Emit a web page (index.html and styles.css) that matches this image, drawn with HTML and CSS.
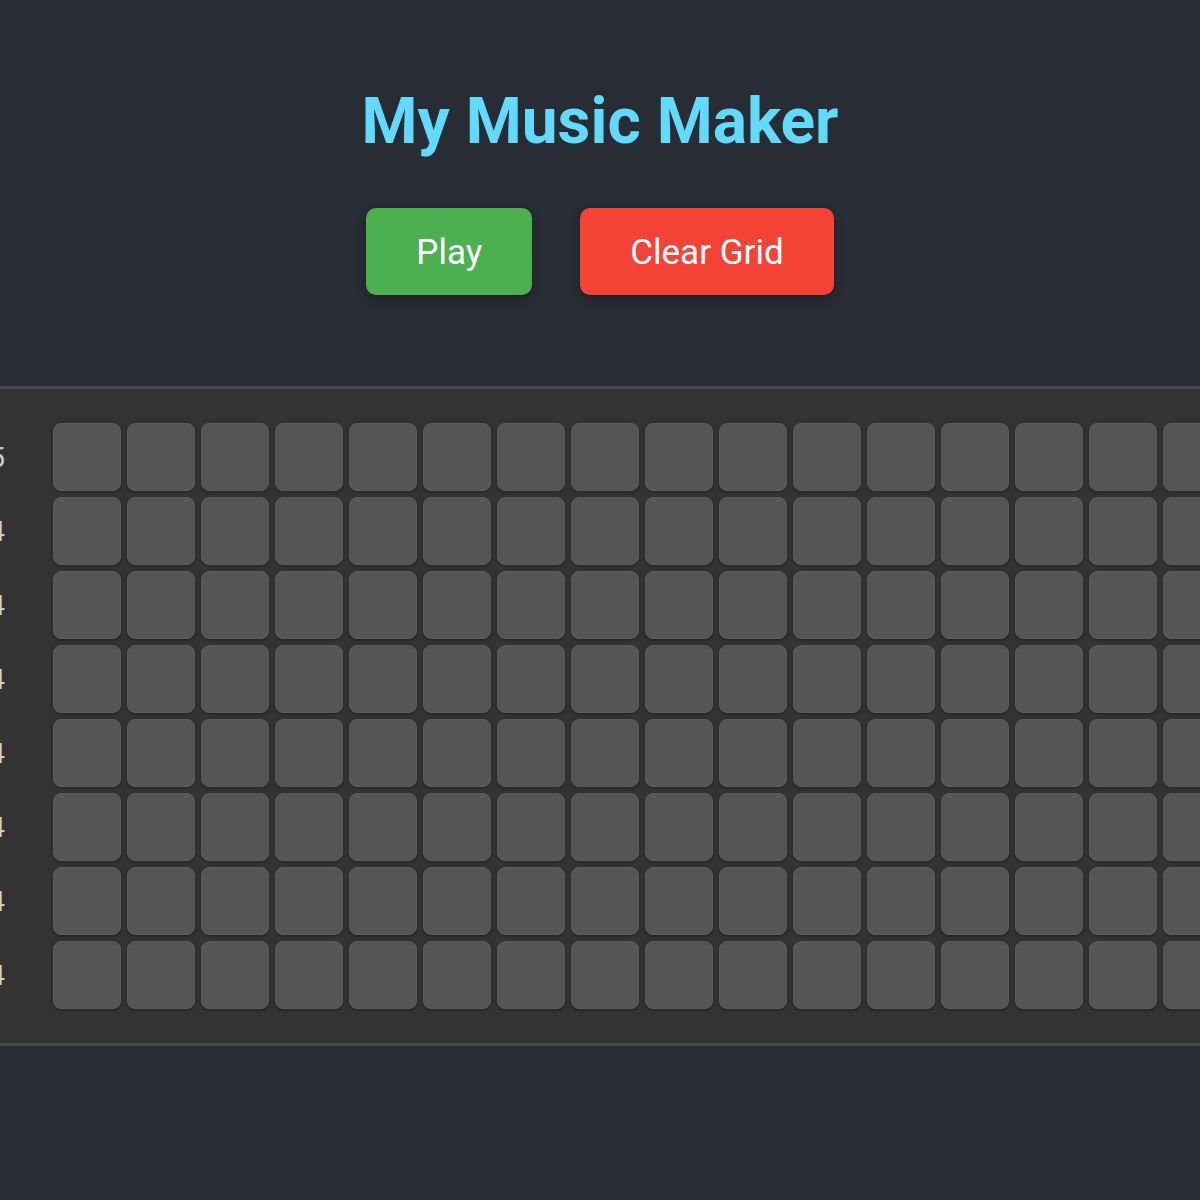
FILE: index.html
```html
<!DOCTYPE html>
<html>
<head>
    <meta name="viewport" content="width=device-width, initial-scale=1.0">
    <title>My Music Maker</title>
    <link rel="stylesheet" href="styles.css">
</head>
<body>
    <div class="app">
        <h1 class="title">My Music Maker</h1>
        <div class="controls">
            <button class="play-button">Play</button>
            <button class="clear-button">Clear Grid</button>
        </div>
        <div class="grid-panel" id="grid"></div>
    </div>

    <script>
        var notes = ['C5', 'B4', 'A4', 'G4', 'F4', 'E4', 'D4', 'C4'];
        var steps = 16;
        var grid = document.getElementById('grid');

        for (var i = 0; i < notes.length; i++) {
            var row = document.createElement('div');
            row.className = 'grid-row';

            var label = document.createElement('div');
            label.className = 'note-label';
            label.textContent = notes[i];
            row.appendChild(label);

            var cells = document.createElement('div');
            cells.className = 'cells';
            for (var j = 0; j < steps; j++) {
                var cell = document.createElement('div');
                cell.className = 'cell';
                cell.addEventListener('click', function() {
                    this.classList.toggle('active');
                });
                cells.appendChild(cell);
            }
            row.appendChild(cells);
            grid.appendChild(row);
        }

        document.querySelector('.clear-button').addEventListener('click', function() {
            var active = document.querySelectorAll('.cell.active');
            for (var k = 0; k < active.length; k++) {
                active[k].classList.remove('active');
            }
        });
    </script>
</body>
</html>
```

FILE: styles.css
```css
html, body {
    overflow-x: hidden;
}

body {
    font-family: Roboto, "Liberation Sans", sans-serif;
    margin: 0;
    padding: 0;
    background-color: #282c34;
    color: #ffffff;
}

.app {
    display: flex;
    flex-direction: column;
    align-items: center;
    padding-top: 84px;
}

.title {
    margin: 0;
    font-size: 64px;
    font-weight: bold;
    line-height: 75px;
    color: #61dafb;
}

.controls {
    display: flex;
    gap: 48px;
    margin-top: 49px;
}

.controls button {
    font-family: Roboto, "Liberation Sans", sans-serif;
    font-size: 35px;
    line-height: 41px;
    padding: 24px 50px 22px;
    border: none;
    border-radius: 10px;
    color: #ffffff;
    cursor: pointer;
    box-shadow: 0 4px 10px rgba(0, 0, 0, 0.3);
}

.play-button {
    background-color: #4caf50;
}

.clear-button {
    background-color: #f44336;
}

.grid-panel {
    flex-shrink: 0;
    margin-top: 91px;
    padding: 34px;
    background-color: #333333;
    border: 3px solid #484848;
    display: flex;
    flex-direction: column;
    gap: 6px;
}

.grid-row {
    display: flex;
    align-items: center;
}

.note-label {
    width: 36px;
    margin-right: 48px;
    text-align: right;
    font-family: Roboto, "Liberation Sans", sans-serif;
    font-size: 28px;
    color: #cccccc;
}

.cells {
    display: flex;
    gap: 6px;
}

.cell {
    width: 68px;
    height: 68px;
    box-sizing: border-box;
    background-color: #555555;
    border: 1px solid #5c5c5c;
    border-radius: 8px;
    box-shadow: 0 1px 3px rgba(0, 0, 0, 0.35);
    cursor: pointer;
}

.cell.active {
    background-color: #61dafb;
}
```
